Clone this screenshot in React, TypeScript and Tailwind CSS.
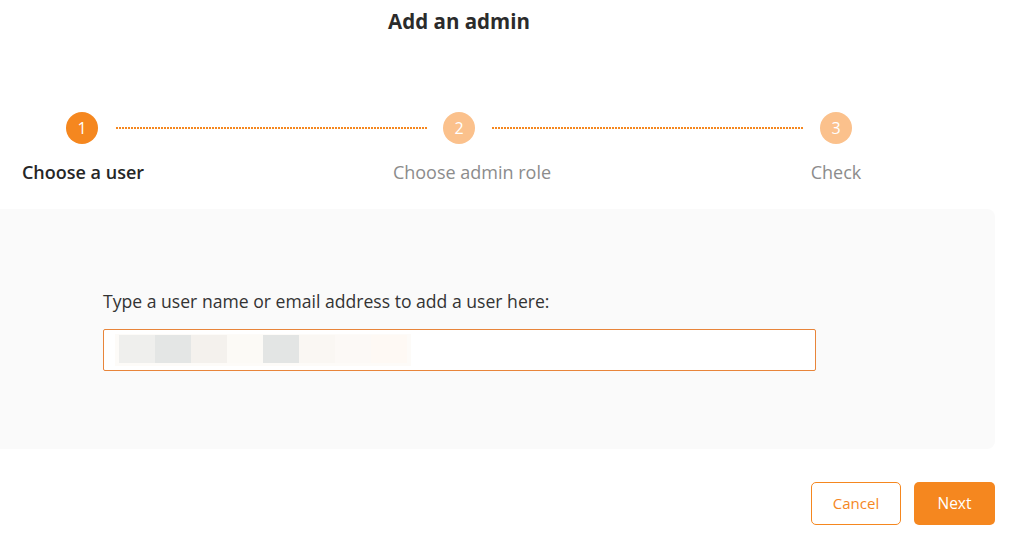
export default function App() {
  const font = { fontFamily: '"Open Sans", "Noto Sans", sans-serif' };
  const blocks = ["#efefed", "#e4e6e5", "#f4f1ed", "#fcfaf6", "#e3e5e4", "#faf7f3", "#fcf9f6", "#fef9f4"];
  return (
    <div className="w-[1012px] h-[534px] bg-white flex flex-col text-[#333]" style={font}>
      <div className="w-[918px] h-[42px] flex items-center justify-center">
        <h1 className="text-[20.5px] font-bold text-[#2b2b2b]">Add an admin</h1>
      </div>
      <div className="mt-[70px] flex items-center h-[32px] pl-[66px]">
        <div className="w-[32px] h-[32px] rounded-full bg-[#f5871f] text-white text-[16px] flex items-center justify-center">1</div>
        <div className="ml-[18px] w-[311px] h-[2px] bg-[repeating-linear-gradient(to_right,#f5871f_0_2px,transparent_2px_3px)]" />
        <div className="ml-[16px] w-[32px] h-[32px] rounded-full bg-[#fbc18c] text-white text-[16px] flex items-center justify-center">2</div>
        <div className="ml-[17px] w-[312px] h-[2px] bg-[repeating-linear-gradient(to_right,#f5871f_0_2px,transparent_2px_3px)]" />
        <div className="ml-[16px] w-[32px] h-[32px] rounded-full bg-[#fbc18c] text-white text-[16px] flex items-center justify-center">3</div>
      </div>
      <div className="mt-[12px] flex h-[32px] items-center text-[18px]">
        <div className="ml-[3px] w-[160px] text-center font-semibold text-[#262626]">Choose a user</div>
        <div className="ml-[229px] w-[160px] text-center text-[#8c8c8c] whitespace-nowrap">Choose admin role</div>
        <div className="ml-[204px] w-[160px] text-center text-[#8c8c8c]">Check</div>
      </div>
      <div className="mt-[21px] w-[995px] h-[240px] bg-[#fafafa] rounded-r-lg pl-[103px] pt-[80px]">
        <div className="text-[17.6px] text-[#333] leading-[24px] whitespace-nowrap">Type a user name or email address to add a user here:</div>
        <div className="mt-[16px] w-[713px] h-[42px] border border-[#e8853a] rounded-[2px] bg-white flex items-center pl-[11px]">
          <div className="flex h-[32px] bg-[#fdfbf8] px-[4px] items-start pt-[1px]">
            {blocks.map((c, i) => (
              <div key={i} className="w-[36px] h-[28px]" style={{ backgroundColor: c }} />
            ))}
          </div>
        </div>
      </div>
      <div className="mt-[33px] w-[995px] flex justify-end gap-[13px]">
        <button className="w-[90px] h-[43px] rounded-[5px] border border-[#f5871f] text-[#f5871f] text-[15px] bg-white">Cancel</button>
        <button className="w-[81px] h-[43px] rounded-[5px] bg-[#f5871f] text-white text-[15.5px] font-medium">Next</button>
      </div>
    </div>
  );
}
